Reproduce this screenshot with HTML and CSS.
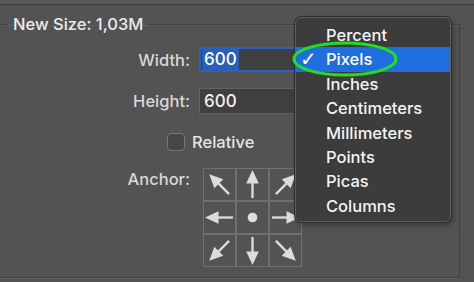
FILE: index.html
```html
<!DOCTYPE html>
<html>
<head>
<meta charset="utf-8">
<link rel="stylesheet" href="styles.css">
</head>
<body>
<div class="dialog">
  <fieldset class="group">
    <legend class="group-title">New Size: 1,03M</legend>
    <div class="row row-width">
      <span class="label">Width:</span>
      <div class="field field-focus"><span class="sel">600</span></div>
    </div>
    <div class="row row-height">
      <span class="label">Height:</span>
      <div class="field"><span>600</span></div>
    </div>
    <div class="row row-rel">
      <span class="check"></span>
      <span class="rel-text">Relative</span>
    </div>
    <div class="row row-anchor">
      <span class="label anchor-label">Anchor:</span>
      <div class="anchor">
        <div class="cell"><svg class="arrow r-315" viewBox="0 0 32 32"><use href="#arr"/></svg></div>
        <div class="cell"><svg class="arrow" viewBox="0 0 32 32"><use href="#arr"/></svg></div>
        <div class="cell"><svg class="arrow r-45" viewBox="0 0 32 32"><use href="#arr"/></svg></div>
        <div class="cell"><svg class="arrow r-270" viewBox="0 0 32 32"><use href="#arr"/></svg></div>
        <div class="cell"><svg class="arrow" viewBox="0 0 32 32"><circle cx="16" cy="16" r="5" fill="#dcdcdc"/></svg></div>
        <div class="cell"><svg class="arrow r-90" viewBox="0 0 32 32"><use href="#arr"/></svg></div>
        <div class="cell"><svg class="arrow r-225" viewBox="0 0 32 32"><use href="#arr"/></svg></div>
        <div class="cell"><svg class="arrow r-180" viewBox="0 0 32 32"><use href="#arr"/></svg></div>
        <div class="cell"><svg class="arrow r-135" viewBox="0 0 32 32"><use href="#arr"/></svg></div>
      </div>
    </div>
  </fieldset>

  <div class="menu">
    <div class="item">Percent</div>
    <div class="item item-on"><span class="tick">✓</span>Pixels</div>
    <div class="item">Inches</div>
    <div class="item">Centimeters</div>
    <div class="item">Millimeters</div>
    <div class="item">Points</div>
    <div class="item">Picas</div>
    <div class="item">Columns</div>
  </div>

  <svg class="ring" viewBox="0 0 108 38" width="108" height="38">
    <ellipse cx="54" cy="19" rx="51" ry="16" fill="none" stroke="#22dd22" stroke-width="3"/>
  </svg>

  <svg width="0" height="0" class="defs">
    <defs>
      <g id="arr">
        <polygon points="16,1 9.5,15 22.5,15" fill="#dcdcdc"/>
        <rect x="14.8" y="13" width="2.4" height="17" fill="#dcdcdc"/>
      </g>
    </defs>
  </svg>
</div>
</body>
</html>
```

FILE: styles.css
```css
* { box-sizing: border-box; }
html, body {
  margin: 0;
  padding: 0;
}
body {
  width: 474px;
  height: 282px;
  overflow: hidden;
  background: #535353;
  font-family: Inter, "Noto Sans", "Liberation Sans", sans-serif;
  font-weight: 500;
  color: #e6e6e6;
}
.dialog {
  position: relative;
  width: 474px;
  height: 282px;
  border-top: 4px solid #5a5a5a;
  box-shadow: inset 0 1px 0 #3c3c3c;
  background: #535353;
}
.group {
  margin: 10px 0 0 -10px;
  width: 470px;
  height: 264px;
  border: 1px solid #404040;
  box-shadow: 0 1px 0 #5e5e5e, inset 0 1px 0 #5e5e5e;
  padding: 13px 0 0 17px;
}
.group-title {
  padding: 0 5px;
  font-size: 16.5px;
  line-height: 20px;
  color: #ececec;
}
.row {
  display: flex;
  align-items: center;
}
.label {
  width: 182px;
  text-align: right;
  font-size: 16.5px;
  color: #d8d8d8;
  margin-right: 9px;
}
.field {
  width: 130px;
  height: 26px;
  background: #3f3f3f;
  border: 1px solid #626262;
  font-size: 17px;
  color: #f2f2f2;
  display: flex;
  align-items: center;
  padding-left: 2px;
}
.field span { padding: 0 2px; line-height: 21px; }
.field-focus {
  height: 25px;
  border: 2px solid #2a62c4;
  padding-left: 1px;
}
.field-focus .sel {
  background: #2a5fb7;
  color: #ffffff;
}
.row-width { margin-top: 0; }
.row-height { margin-top: 16px; }
.row-rel { margin-top: 18px; padding-left: 159px; }
.check {
  width: 18px;
  height: 18px;
  border: 1px solid #777;
  border-radius: 4px;
  background: #464646;
  margin-right: 7px;
}
.rel-text { font-size: 16.5px; color: #e4e4e4; }
.row-anchor { margin-top: 16px; align-items: flex-start; }
.anchor-label { line-height: 22px; }
.anchor {
  margin-left: 4px;
  display: grid;
  grid-template-columns: repeat(3, 31px);
  grid-template-rows: repeat(3, 31px);
  gap: 2px;
  padding: 1px;
  background: #707070;
}
.cell {
  background: #535353;
  display: flex;
  align-items: center;
  justify-content: center;
}
.arrow { width: 31px; height: 31px; }
.r-45 { transform: rotate(45deg); }
.r-90 { transform: rotate(90deg); }
.r-135 { transform: rotate(135deg); }
.r-180 { transform: rotate(180deg); }
.r-225 { transform: rotate(225deg); }
.r-270 { transform: rotate(270deg); }
.r-315 { transform: rotate(315deg); }

.menu {
  position: absolute;
  left: 295px;
  top: 13px;
  width: 156px;
  height: 205px;
  background: #3c3c3c;
  border: 1px solid #5e5e5e;
  border-radius: 6px;
  box-shadow: 0 0 0 1px #2e2e2e, 2px 3px 6px rgba(0,0,0,0.35);
  padding-top: 5px;
}
.item {
  position: relative;
  height: 24.4px;
  line-height: 24.4px;
  padding-left: 30px;
  font-size: 16.5px;
  color: #f4f4f4;
}
.item-on { background: #1f6ee0; color: #fff; }
.tick {
  position: absolute;
  left: 4px;
  top: 0;
  font-size: 20px;
  font-weight: 400;
  font-family: "DejaVu Sans", sans-serif;
}
.ring {
  position: absolute;
  left: 291px;
  top: 36px;
}
.defs { position: absolute; }
```
